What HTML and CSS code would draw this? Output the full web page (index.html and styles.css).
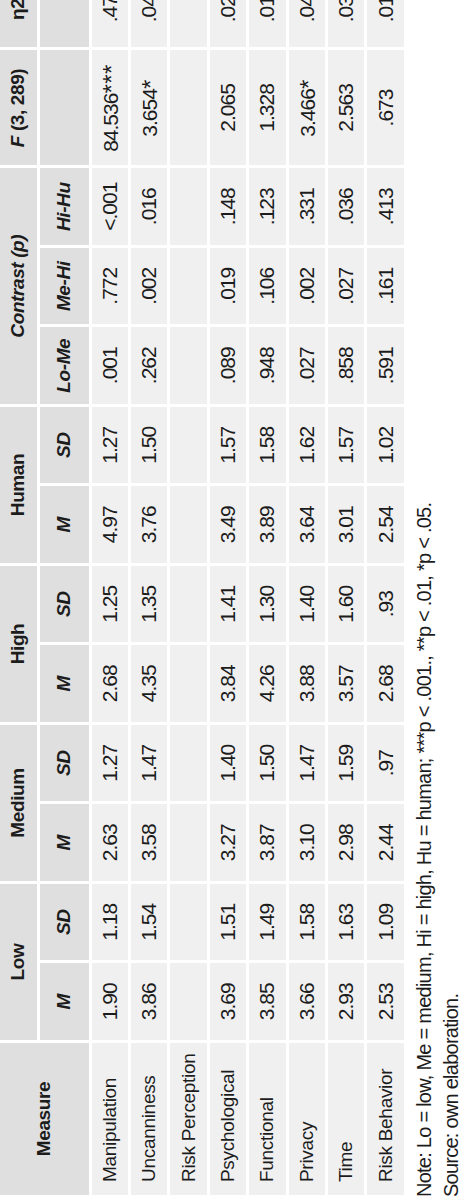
FILE: index.html
```html
<!DOCTYPE html>
<html lang="en">
<head>
<meta charset="utf-8">
<title>Table</title>
<link rel="stylesheet" href="styles.css">
</head>
<body>
<div class="page">
  <table class="tbl">
    <colgroup>
      <col class="c-measure">
      <col class="c-num"><col class="c-num"><col class="c-num"><col class="c-num">
      <col class="c-num"><col class="c-num"><col class="c-num"><col class="c-num">
      <col class="c-num"><col class="c-num"><col class="c-num">
      <col class="c-f">
      <col class="c-num">
    </colgroup>
    <thead>
      <tr class="h1">
        <th rowspan="2" class="measure-h">Measure</th>
        <th colspan="2">Low</th>
        <th colspan="2">Medium</th>
        <th colspan="2">High</th>
        <th colspan="2">Human</th>
        <th colspan="3"><i>Contrast (p)</i></th>
        <th><i>F</i> (3, 289)</th>
        <th>η2</th>
      </tr>
      <tr class="h2">
        <th><i>M</i></th><th><i>SD</i></th>
        <th><i>M</i></th><th><i>SD</i></th>
        <th><i>M</i></th><th><i>SD</i></th>
        <th><i>M</i></th><th><i>SD</i></th>
        <th><i>Lo-Me</i></th><th><i>Me-Hi</i></th><th><i>Hi-Hu</i></th>
        <th></th><th></th>
      </tr>
    </thead>
    <tbody>
      <tr><td class="lbl">Manipulation</td><td>1.90</td><td>1.18</td><td>2.63</td><td>1.27</td><td>2.68</td><td>1.25</td><td>4.97</td><td>1.27</td><td>.001</td><td>.772</td><td>&lt;.001</td><td>84.536<span class="sig">***</span></td><td>.47</td></tr>
      <tr><td class="lbl">Uncanniness</td><td>3.86</td><td>1.54</td><td>3.58</td><td>1.47</td><td>4.35</td><td>1.35</td><td>3.76</td><td>1.50</td><td>.262</td><td>.002</td><td>.016</td><td>3.654<span class="sig">*</span></td><td>.04</td></tr>
      <tr><td class="lbl">Risk Perception</td><td></td><td></td><td></td><td></td><td></td><td></td><td></td><td></td><td></td><td></td><td></td><td></td><td></td></tr>
      <tr><td class="lbl">Psychological</td><td>3.69</td><td>1.51</td><td>3.27</td><td>1.40</td><td>3.84</td><td>1.41</td><td>3.49</td><td>1.57</td><td>.089</td><td>.019</td><td>.148</td><td>2.065</td><td>.02</td></tr>
      <tr><td class="lbl">Functional</td><td>3.85</td><td>1.49</td><td>3.87</td><td>1.50</td><td>4.26</td><td>1.30</td><td>3.89</td><td>1.58</td><td>.948</td><td>.106</td><td>.123</td><td>1.328</td><td>.01</td></tr>
      <tr><td class="lbl">Privacy</td><td>3.66</td><td>1.58</td><td>3.10</td><td>1.47</td><td>3.88</td><td>1.40</td><td>3.64</td><td>1.62</td><td>.027</td><td>.002</td><td>.331</td><td>3.466<span class="sig">*</span></td><td>.04</td></tr>
      <tr><td class="lbl">Time</td><td>2.93</td><td>1.63</td><td>2.98</td><td>1.59</td><td>3.57</td><td>1.60</td><td>3.01</td><td>1.57</td><td>.858</td><td>.027</td><td>.036</td><td>2.563</td><td>.03</td></tr>
      <tr><td class="lbl">Risk Behavior</td><td>2.53</td><td>1.09</td><td>2.44</td><td>.97</td><td>2.68</td><td>.93</td><td>2.54</td><td>1.02</td><td>.591</td><td>.161</td><td>.413</td><td>.673</td><td>.01</td></tr>
    </tbody>
  </table>
  <p class="note">Note: Lo = low, Me = medium, Hi = high, Hu = human; ***p &lt; .001., **p &lt; .01, *p &lt; .05.</p>
  <p class="note">Source: own elaboration.</p>
</div>
</body>
</html>
```

FILE: styles.css
```css
html {
  overflow: hidden;
  background: #ffffff;
}

body {
  margin: 0;
  padding: 0;
  width: 474px;
  height: 1199px;
}

.page {
  width: 1199px;
  height: 474px;
  overflow: hidden;
  transform-origin: 0 0;
  transform: translateY(1199px) rotate(-90deg);
  font-family: "Liberation Sans", Arial, sans-serif;
  color: #1c1c1c;
}

.tbl {
  border-collapse: separate;
  border-spacing: 3px 3.4px;
  table-layout: fixed;
  width: 1229px;
  margin: -3.4px 0 0 1px;
  font-size: 21px;
  letter-spacing: -1px;
}

.c-measure { width: 152px; }
.c-num { width: 76.5px; }
.c-f { width: 115px; }

.tbl th,
.tbl td {
  padding: 0;
  text-align: center;
  vertical-align: middle;
  white-space: nowrap;
  overflow: hidden;
}

.tbl th {
  background: #dfdfdf;
  font-weight: bold;
  font-size: 19px;
  letter-spacing: -0.4px;
}

.tbl td {
  background: #f0f0f0;
  font-weight: normal;
}

.tbl .h1 { height: 37px; }
.tbl .h2 { height: 49px; }
.tbl tbody tr { height: 36.4px; }

.tbl td.lbl {
  text-align: left;
  padding-left: 13px;
  font-size: 19px;
  letter-spacing: -0.3px;
}

.sig {
  font-size: 24px;
  letter-spacing: 0.5px;
  position: relative;
  top: 2px;
}

.note {
  margin: 0;
  padding-left: 2px;
  font-size: 20px;
  line-height: 27px;
  letter-spacing: -0.75px;
}

.note:first-of-type {
  margin-top: 4px;
}
```
